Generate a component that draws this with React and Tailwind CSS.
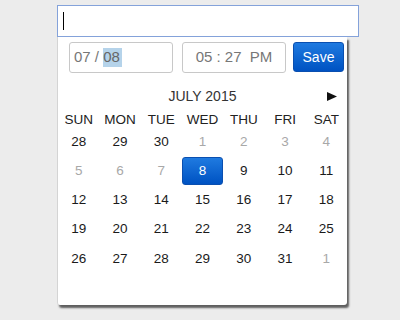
import React from "react";

const weeks = [
  [[28, 0], [29, 0], [30, 0], [1, 1], [2, 1], [3, 1], [4, 1]],
  [[5, 1], [6, 1], [7, 1], [8, 2], [9, 0], [10, 0], [11, 0]],
  [[12, 0], [13, 0], [14, 0], [15, 0], [16, 0], [17, 0], [18, 0]],
  [[19, 0], [20, 0], [21, 0], [22, 0], [23, 0], [24, 0], [25, 0]],
  [[26, 0], [27, 0], [28, 0], [29, 0], [30, 0], [31, 0], [1, 1]],
];
const days = ["SUN", "MON", "TUE", "WED", "THU", "FRI", "SAT"];

export default function App() {
  return (
    <div
      className="w-[400px] h-[320px] bg-[#ececec] pl-[57px] pt-[5px] overflow-hidden"
      style={{ fontFamily: '"Liberation Sans", Arial, sans-serif' }}
    >
      <div className="w-[302px] h-[32px] border border-[#84a2da] bg-white flex items-center pl-[5px]">
        <span className="w-px h-[18px] bg-black" />
      </div>
      <div className="w-[290px] h-[268px] bg-white border-l border-[#d4d4d4] rounded-b-[3px] shadow-[2px_3px_2px_rgba(0,0,0,0.6)] pt-[5px]">
        <div className="flex items-center pl-[11px]">
          <div className="w-[104px] h-[31px] border border-[#c8c8c8] rounded-[3px] flex items-center pl-[4px] text-[15px] text-[#777]">
            <span>07 /&nbsp;</span>
            <span className="bg-[#b5d3ea] text-[#666] h-[19px] flex items-center pr-[2px]">08</span>
          </div>
          <div className="ml-[9px] w-[104px] h-[31px] border border-[#c8c8c8] rounded-[3px] flex items-center justify-center text-[15px] text-[#777] whitespace-pre">
            05 : 27  PM
          </div>
          <div className="ml-[7px] w-[51px] h-[30px] -mt-px rounded-[3px] bg-gradient-to-b from-[#1f7ae0] to-[#0052c2] border border-[#0a4fb0] flex items-center justify-center text-white text-[14px]">
            Save
          </div>
        </div>
        <div className="relative h-[20px] mt-[13px] flex items-center justify-center text-[14px] text-[#333]">
          JULY 2015
          <svg className="absolute left-[269px] top-[6px]" width="10" height="9" viewBox="0 0 10 9">
            <polygon points="0,0 10,4.5 0,9" fill="#111" />
          </svg>
        </div>
        <div className="grid grid-cols-7 mt-[7px] h-[14px] items-center text-[13.5px] text-[#222]">
          {days.map((d) => (
            <div key={d} className="text-center leading-[14px]">{d}</div>
          ))}
        </div>
        {weeks.map((w, i) => (
          <div key={i} className="grid grid-cols-7 h-[29.25px]">
            {w.map(([n, t], j) => (
              <div key={j} className="flex items-center justify-center">
                {t === 2 ? (
                  <div className="w-[41px] h-[28px] rounded-[3px] bg-gradient-to-b from-[#1f7ae0] to-[#0052c2] border border-[#0a4fb0] flex items-center justify-center text-white text-[13.5px]">
                    {n}
                  </div>
                ) : (
                  <span className={t === 1 ? "text-[13.5px] text-[#a8a8a8]" : "text-[13.5px] text-[#1a1a1a]"}>{n}</span>
                )}
              </div>
            ))}
          </div>
        ))}
      </div>
    </div>
  );
}
